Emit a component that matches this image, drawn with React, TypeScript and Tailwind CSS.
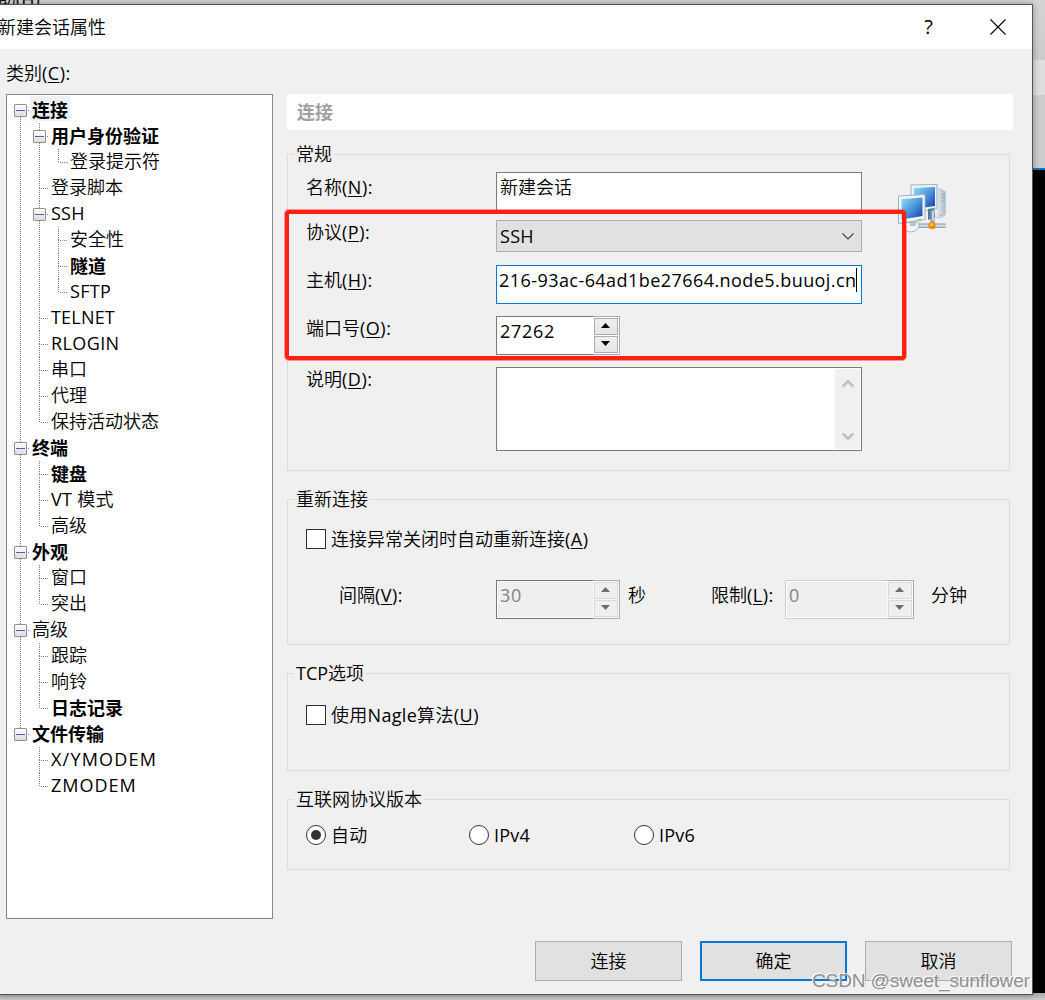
import React from "react";

type TreeItem = {
  label: string
  bold?: boolean
  selected?: boolean
  spacing?: string
  children?: TreeItem[]
}

const categories: TreeItem[] = [
  {
    label: '连接', bold: true, selected: true,
    children: [
      { label: '用户身份验证', bold: true, children: [{ label: '登录提示符' }] },
      { label: '登录脚本' },
      { label: 'SSH', spacing: 'tracking-[0.2px]', children: [{ label: '安全性' }, { label: '隧道', bold: true }, { label: 'SFTP', spacing: 'tracking-[0.3px]' }] },
      { label: 'TELNET', spacing: 'tracking-[0.2px]' },
      { label: 'RLOGIN', spacing: 'tracking-[0.4px]' },
      { label: '串口' },
      { label: '代理' },
      { label: '保持活动状态' },
    ],
  },
  { label: '终端', bold: true, children: [{ label: '键盘', bold: true }, { label: 'VT 模式', spacing: 'tracking-[0.3px]' }, { label: '高级' }] },
  { label: '外观', bold: true, children: [{ label: '窗口' }, { label: '突出' }] },
  { label: '高级', children: [{ label: '跟踪' }, { label: '响铃' }, { label: '日志记录', bold: true }] },
  { label: '文件传输', bold: true, children: [{ label: 'X/YMODEM', spacing: 'tracking-[1.2px]' }, { label: 'ZMODEM', spacing: 'tracking-[1px]' }] },
]

const boldText = 'font-bold font-["Open_Sans","Noto_Sans_CJK_SC",sans-serif]'
const vDots = 'w-px bg-[repeating-linear-gradient(to_bottom,#808080_0_1px,transparent_1px_2px)]'
const hDots = 'h-px bg-[repeating-linear-gradient(to_right,#808080_0_1px,transparent_1px_2px)]'

// one 19px wide cell of the tree, drawn left of the label
const Branch = ({ toggle, first, last }: { toggle: boolean; first: boolean; last: boolean }) => (
  <div className="flex h-[26px] w-[19px] items-center">
    <div className="flex h-full w-[13px] ml-[3px] flex-col items-center">
      <div className={`${first ? 'w-px' : vDots} ${toggle ? 'h-[7px]' : 'h-[13px]'}`} />
      {toggle && (
        <div className="flex h-[13px] w-[13px] shrink-0 items-center justify-center rounded-[1px] border border-[#919191] bg-linear-to-b from-white to-[#dcdcdc]">
          <div className="h-px w-[9px] bg-[#4a63a8]" />
        </div>
      )}
      <div className={`grow ${last ? 'w-px' : vDots}`} />
    </div>
    {toggle ? <div className={`ml-px w-px ${hDots}`} /> : <div className={`-ml-[5px] w-[8px] shrink-0 ${hDots}`} />}
  </div>
)

const TreeNode = ({ item, guides, first, last }: { item: TreeItem; guides: boolean[]; first: boolean; last: boolean }) => (
  <li>
    <div className="flex h-[26px] items-start">
      {guides.map((line, i) => (
        <div key={i} className="flex h-full w-[19px] shrink-0 pl-[9px]">
          {line && <div className={vDots} />}
        </div>
      ))}
      <Branch toggle={!!item.children} first={first} last={last} />
      <span className={`-mt-px h-[25px] whitespace-nowrap px-[2px] ${item.bold ? `leading-[28px] ${boldText}` : 'leading-[26px]'} ${item.selected ? 'bg-[#f0f0f0]' : ''} ${item.spacing ?? ''}`}>
        {item.label}
      </span>
    </div>
    {item.children && (
      <ul>
        {item.children.map((child, i) => (
          <TreeNode
            key={child.label}
            item={child}
            guides={[...guides, !last]}
            first={false}
            last={i === item.children!.length - 1}
          />
        ))}
      </ul>
    )}
  </li>
)

// label with its access key underlined
const Label = ({ text, k, colon = true, className = '' }: { text: string; k: string; colon?: boolean; className?: string }) => (
  <span className={`whitespace-nowrap leading-[24px] ${className}`}>
    {text}<span className="tracking-[0.5px]">(<span className="underline decoration-1 underline-offset-2">{k}</span>){colon && ':'}</span>
  </span>
)

const Group = ({ title, className, children }: { title: string; className: string; children: React.ReactNode }) => (
  <fieldset className={`border border-[#dcdcdc] ${className}`}>
    <legend className="ml-[6px] h-[24px] px-[2px] leading-[24px]">{title}</legend>
    {children}
  </fieldset>
)

const Spinner = ({ value, className, disabled = false, faint = false }: { value: string; className: string; disabled?: boolean; faint?: boolean }) => {
  const btn = disabled ? 'border-[#d9d9d9] bg-[#efefef]' : 'border-[#acacac] bg-linear-to-b from-[#f0f0f0] to-[#e5e5e5]'
  const fill = disabled ? '#6d6d6d' : '#000'
  return (
    <div className={`flex h-[39px] ${className}`}>
      <div className={`grow border border-r-0 pl-[3px] pt-[2px] leading-[24px] tracking-[0.7px] ${faint ? 'border-[#cccccc]' : 'border-[#7a7a7a]'} ${disabled ? 'bg-[#efefef] text-[#838383] shadow-[inset_1px_1px_0_#fff,inset_0_-1px_0_#fff]' : 'bg-white'}`}>
        {value}
      </div>
      <div className={`flex w-[27px] flex-col gap-px border border-l-0 border-[#abadb3] py-px pl-px pr-px ${disabled ? 'bg-[#f8f8f8]' : 'bg-white'}`}>
        <div className={`flex h-[17px] w-[24px] items-start justify-center border pr-px pt-[4px] ${btn}`}>
          <svg width="9" height="5" viewBox="0 0 9 5"><path d="M4.500 0 9 5H0z" fill={fill} /></svg>
        </div>
        <div className={`flex h-[17px] w-[24px] items-start justify-center border pr-px pt-[4px] ${btn}`}>
          <svg width="9" height="5" viewBox="0 0 9 5"><path d="M0 0h9L4.500 5z" fill={fill} /></svg>
        </div>
      </div>
    </div>
  )
}

const CheckBox = () => <span className="mr-[5px] h-5 w-5 shrink-0 border border-[#333] bg-white" />

const Radio = ({ label, checked = false, className = '' }: { label: string; checked?: boolean; className?: string }) => (
  <div className={`flex items-center ${className}`}>
    <span className="mr-[5px] flex h-5 w-5 shrink-0 items-center justify-center rounded-full border border-[#333] bg-white">
      {checked && <span className="h-[10px] w-[10px] rounded-full bg-[#333]" />}
    </span>
    <span className="tracking-[0.2px]">{label}</span>
  </div>
)

const NetworkIcon = () => (
  <svg width="50" height="50" viewBox="0 0 50 50">
    <defs>
      <linearGradient id="screen" x1="0" y1="0" x2="1" y2="1">
        <stop offset="0" stopColor="#8fe0f8" />
        <stop offset="0.5" stopColor="#4a97dc" />
        <stop offset="1" stopColor="#1236a8" />
      </linearGradient>
      <linearGradient id="tower" x1="0" y1="0" x2="1" y2="0">
        <stop offset="0" stopColor="#fff" />
        <stop offset="1" stopColor="#a9bccb" />
      </linearGradient>
      <linearGradient id="cable" x1="0" y1="0" x2="0" y2="1">
        <stop offset="0" stopColor="#8796a5" />
        <stop offset="0.5" stopColor="#dce7ef" />
        <stop offset="1" stopColor="#8594a5" />
      </linearGradient>
    </defs>
    <path d="M38 5l5 0 4.500 2.500v23L43 34l-8-1z" fill="url(#tower)" stroke="#b8c8d4" strokeWidth="0.8" />
    <path d="M43 10l4 1.500M43 13l4 1.500M43 17l4 1" stroke="#8199ae" strokeWidth="0.8" />
    <circle cx="42.500" cy="31" r="0.800" fill="#ef8a62" />
    <path d="M13 1 39 .5v24L27 27l-14-1z" fill="#edf4f8" stroke="#9db0be" strokeWidth="1" />
    <path d="M16 4 37 3v19L16 25z" fill="url(#screen)" />
    <path d="M30 25l6-1 1 9-7 3z" fill="#4f7ba2" />
    <path d="M34.500 26v14" stroke="#899cac" strokeWidth="4" />
    <path d="M35 27v10" stroke="#dbe6ee" strokeWidth="1.500" />
    <rect x="18" y="39.500" width="30" height="4.500" rx="1" fill="url(#cable)" />
    <path d="M6 39c-1 7 4 10 9 8.500 5-1.500 7-5 5-9.500z" fill="#f3f7fa" stroke="#a5b8c4" strokeWidth="1" />
    <path d="M12 36h6v6h-6z" fill="#b5c4ce" />
    <path d="M.5 12 27 10.500v25L.5 39.500z" fill="#f2f7fa" stroke="#9db0be" strokeWidth="1" />
    <path d="M3.500 15 24.500 13.500v18.500L3.500 35.500z" fill="url(#screen)" />
    <path d="M20 36l3-.5" stroke="#76c85d" strokeWidth="1.200" />
    <path d="M35 24.500l2-.3" stroke="#76c85d" strokeWidth="1.200" />
    <circle cx="34" cy="41.500" r="3.700" fill="#f08a10" />
    <circle cx="33.500" cy="40.500" r="1.800" fill="#ffc23c" />
  </svg>
)

const App = () => {
  return (
    <div className={'relative h-[1000px] w-[1045px] overflow-hidden bg-[#c6c6c6] text-[18px] leading-[24px] text-black font-["Open_Sans","Noto_Sans_CJK_SC_DemiLight","Noto_Sans_CJK_SC",sans-serif]'}>
      {/* parent window behind the dialog */}
      <div className="absolute inset-0 flex flex-col">
        <div className="relative h-[60px] bg-linear-to-b from-[#d4d4d4] to-[#cbcbcb]">
          <span className="absolute -left-[20px] -top-[13px] whitespace-nowrap">帮助(H)</span>
        </div>
        <div className="h-[35px] bg-[#dedede]" />
        <div className="h-[73px] bg-[#cccccc]" />
        <div className="h-[2px] bg-[#0078d0]" />
        <div className="h-[823px] bg-black" />
        <div className="grow bg-linear-to-b from-[#a8a8a8] to-[#cccccc]" />
      </div>

      <div className="relative mt-1 flex h-[991px] w-[1033px] flex-col border-y border-r border-[#555] bg-[#f0f0f0] shadow-[0_0_6px_rgba(0,0,0,0.35)]">
        <div className="flex h-[44px] shrink-0 items-center bg-white">
          <h1 className="-ml-[2px] grow pb-px">新建会话属性</h1>
          <span className="mr-[57px] pb-px text-[20px]">?</span>
          <svg className="mb-px mr-[26px]" width="16" height="16" viewBox="0 0 16 16">
            <path d="M.5.5l15 15M15.500.5l-15 15" stroke="#000" strokeWidth="1.100" fill="none" />
          </svg>
        </div>

        <div className="flex pl-[6px]">
          <div className="w-[267px] shrink-0">
            <div className="h-[45px] pt-[12px]"><Label text="类别" k="C" /></div>
            <ul className="h-[825px] border border-[#828790] bg-white pl-[4px] pt-[2px]">
              {categories.map((c, i) => (
                <TreeNode key={c.label} item={c} guides={[]} first={i === 0} last={i === categories.length - 1} />
              ))}
            </ul>
          </div>

          <div className="ml-[14px] w-[726px] pt-[45px]">
            <h2 className={`h-[36px] bg-white pl-[10px] leading-[36px] text-[#a0a0a0] ${boldText}`}>连接</h2>

            <Group title="常规" className="mt-[12px] h-[329px] w-[723px]">
              <div className="flex pl-[18px] pt-[6px]">
                <div className="w-[556px]">
                  <div className="flex h-[39px]">
                    <Label text="名称" k="N" className="w-[190px] pt-[3px]" />
                    <div className="grow border border-[#7a7a7a] bg-white pl-[3px] pt-[2px]">新建会话</div>
                  </div>
                  <div className="mt-[9px] flex h-[32px]">
                    <Label text="协议" k="P" className="w-[190px]" />
                    <div className="flex grow items-center justify-between border border-[#adadad] bg-[#e1e1e1] pl-[3px] pr-[7px]">
                      <span className="tracking-[0.3px]">SSH</span>
                      <svg width="12" height="7" viewBox="0 0 12 7">
                        <path d="M.5.5 6 6 11.500.5" stroke="#444" strokeWidth="1.200" fill="none" />
                      </svg>
                    </div>
                  </div>
                  <div className="mt-[13px] flex h-[39px]">
                    <Label text="主机" k="H" className="w-[190px] pt-[3px]" />
                    <div className="flex grow items-start overflow-hidden border border-[#0078d7] bg-white pl-[2px] pt-[2px]">
                      <span className="w-[357px] whitespace-nowrap tracking-[0.44px]">216-93ac-64ad1be27664.node5.buuoj.cn</span>
                      <span className="h-[24px] w-px bg-black" />
                    </div>
                  </div>
                  <div className="mt-[12px] flex h-[39px]">
                    <Label text="端口号" k="O" className="w-[190px]" />
                    <Spinner value="27262" className="w-[124px]" />
                  </div>
                  <div className="mt-[12px] flex h-[84px]">
                    <Label text="说明" k="D" className="w-[190px]" />
                    <div className="flex grow justify-end border border-[#7a7a7a] bg-white p-px">
                      <div className="flex w-[25px] flex-col items-center justify-between bg-[#f0f0f0] pb-[8px] pt-[10px]">
                        <svg width="12" height="9" viewBox="0 0 12 9"><path d="M.8 7.500 6 2.200l5.200 5.300" stroke="#bfbfbf" strokeWidth="2.600" fill="none" /></svg>
                        <svg width="12" height="9" viewBox="0 0 12 9"><path d="M.8 1.500 6 6.800l5.200-5.300" stroke="#bfbfbf" strokeWidth="2.600" fill="none" /></svg>
                      </div>
                    </div>
                  </div>
                </div>
                <div className="ml-[36px] mt-[12px]"><NetworkIcon /></div>
              </div>
            </Group>

            <Group title="重新连接" className="mt-[16px] h-[158px] w-[723px]">
              <div className="flex items-center pl-[18px] pt-[16px]">
                <CheckBox />
                <Label text="连接异常关闭时自动重新连接" k="A" colon={false} />
              </div>
              <div className="mt-[29px] flex pl-[51px]">
                <Label text="间隔" k="V" className="w-[157px] pt-[3px]" />
                <Spinner value="30" className="w-[124px]" disabled />
                <span className="w-[91px] pl-[8px] pt-[3px]">秒</span>
                <Label text="限制" k="L" className="w-[74px] pt-[3px]" />
                <Spinner value="0" className="w-[129px]" disabled faint />
                <span className="pl-[17px] pt-[3px]">分钟</span>
              </div>
            </Group>

            <Group title="TCP选项" className="mt-[16px] h-[110px] w-[723px]">
              <div className="flex items-center pl-[18px] pt-[18px]">
                <CheckBox />
                <Label text="使用Nagle算法" k="U" colon={false} className="tracking-[0.3px]" />
              </div>
            </Group>

            <Group title="互联网协议版本" className="mt-[16px] h-[83px] w-[723px]">
              <div className="flex pl-[18px] pt-[12px]">
                <Radio label="自动" checked className="w-[163px]" />
                <Radio label="IPv4" className="w-[165px]" />
                <Radio label="IPv6" />
              </div>
            </Group>

            <div className="mt-[71px] flex justify-end gap-[18px] pr-px">
              <button className="h-[40px] w-[147px] border border-[#adadad] bg-[#e1e1e1]">连接</button>
              <button className="h-[40px] w-[147px] border-2 border-[#0078d7] bg-[#e1e1e1]">确定</button>
              <button className="h-[40px] w-[147px] border border-[#adadad] bg-[#e1e1e1]">取消</button>
            </div>
          </div>
        </div>
      </div>

      {/* marker around the connection fields */}
      <div className="absolute left-[285px] top-[210px] h-[150px] w-[621px] rounded-[4px] border-[4px] border-[#ff2015] shadow-[0_0_0_1px_rgba(255,32,21,0.45)]" />
      <span className={'absolute left-[812px] top-[969px] whitespace-nowrap text-[19px] leading-[24px] -tracking-[0.1px] text-[#8f8f8f] [text-shadow:-1px_-1px_0_#fff] font-["Liberation_Sans",sans-serif]'}>
        CSDN @sweet_sunflower
      </span>
    </div>
  )
}

export default App
